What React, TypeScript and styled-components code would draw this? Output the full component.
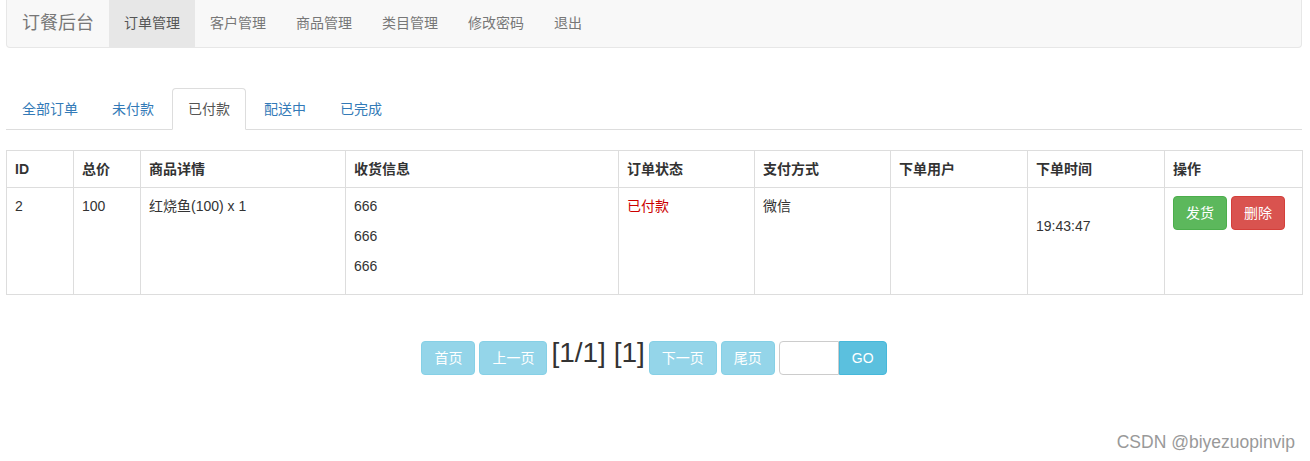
import styled, { createGlobalStyle } from "styled-components";

const GlobalStyle = createGlobalStyle`
  html, body {
    margin: 0;
    padding: 0;
    background: #fff;
  }
  body {
    font-family: "Liberation Sans", Arial, "Noto Sans CJK SC", sans-serif;
    font-size: 14px;
    line-height: 20px;
    color: #333;
  }
  * {
    box-sizing: border-box;
  }
`;

const Page = styled.div`
  position: relative;
  width: 1310px;
  height: 461px;
  padding: 0 8px 0 6px;
  overflow: hidden;
`;

const Navbar = styled.div`
  display: flex;
  align-items: stretch;
  height: 48px;
  background: #f8f8f8;
  border: 1px solid #e7e7e7;
  border-top: none;
  border-radius: 0 0 4px 4px;
`;

const Brand = styled.div`
  display: flex;
  align-items: center;
  padding: 0 15px 2px 15px;
  font-size: 18px;
  color: #777;
`;

const NavItem = styled.a<{ $active?: boolean }>`
  display: flex;
  align-items: center;
  padding: 0 15px 2px;
  color: ${({ $active }) => ($active ? "#555" : "#777")};
  background: ${({ $active }) => ($active ? "#e7e7e7" : "transparent")};
  text-decoration: none;
`;

const Tabs = styled.div`
  display: flex;
  margin-top: 40px;
  border-bottom: 1px solid #ddd;
`;

const Tab = styled.a<{ $active?: boolean }>`
  display: block;
  margin-right: 2px;
  margin-bottom: -1px;
  padding: 10px 15px;
  line-height: 20px;
  color: ${({ $active }) => ($active ? "#555" : "#337ab7")};
  background: ${({ $active }) => ($active ? "#fff" : "transparent")};
  border: 1px solid ${({ $active }) => ($active ? "#ddd" : "transparent")};
  border-bottom-color: transparent;
  border-radius: 4px 4px 0 0;
  text-decoration: none;
`;

const Table = styled.table`
  width: 1296px;
  margin-top: 20px;
  border-collapse: collapse;
  table-layout: fixed;
`;

const Th = styled.th`
  padding: 8px;
  text-align: left;
  font-weight: bold;
  color: #333;
  border: 1px solid #ddd;
  vertical-align: bottom;
`;

const Td = styled.td`
  padding: 8px;
  vertical-align: top;
  border: 1px solid #ddd;
`;

const Line = styled.p`
  margin: 0 0 10px;
`;

const Status = styled.span`
  color: #cc0000;
`;

const Time = styled.div`
  margin-top: 20px;
`;

const ActionBtn = styled.button<{ $kind: "success" | "danger" }>`
  display: inline-block;
  height: 34px;
  padding: 6px 12px;
  margin-right: 4px;
  font-family: inherit;
  font-size: 14px;
  line-height: 20px;
  color: #fff;
  border-radius: 4px;
  border: 1px solid ${({ $kind }) => ($kind === "success" ? "#4cae4c" : "#d43f3a")};
  background: ${({ $kind }) => ($kind === "success" ? "#5cb85c" : "#d9534f")};
`;

const Pager = styled.div`
  display: flex;
  justify-content: center;
  align-items: flex-start;
  gap: 4px;
  margin-top: 46px;
`;

const PageBtn = styled.button<{ $disabled?: boolean }>`
  height: 34px;
  padding: 6px 12px;
  font-family: inherit;
  font-size: 14px;
  line-height: 20px;
  color: #fff;
  border-radius: 4px;
  border: 1px solid #46b8da;
  background: #5bc0de;
  opacity: ${({ $disabled }) => ($disabled ? 0.65 : 1)};
`;

const PageText = styled.span`
  font-size: 28px;
  line-height: 28px;
  color: #333;
  margin-top: -2px;
`;

const PageInput = styled.input`
  width: 60px;
  height: 34px;
  padding: 6px 12px;
  border: 1px solid #ccc;
  border-radius: 4px 0 0 4px;
  margin-right: -4px;
`;

const GoBtn = styled(PageBtn)`
  border-radius: 0 4px 4px 0;
`;

const Watermark = styled.div`
  position: absolute;
  right: 15px;
  bottom: 9px;
  font-size: 17.5px;
  color: #999;
`;

const headers = ["ID", "总价", "商品详情", "收货信息", "订单状态", "支付方式", "下单用户", "下单时间", "操作"];
const widths = [67, 67, 205, 273, 136, 136, 137, 137, 138];

export default function App() {
  return (
    <>
      <GlobalStyle />
      <Page>
        <Navbar>
          <Brand>订餐后台</Brand>
          <NavItem $active>订单管理</NavItem>
          <NavItem>客户管理</NavItem>
          <NavItem>商品管理</NavItem>
          <NavItem>类目管理</NavItem>
          <NavItem>修改密码</NavItem>
          <NavItem>退出</NavItem>
        </Navbar>

        <Tabs>
          <Tab>全部订单</Tab>
          <Tab>未付款</Tab>
          <Tab $active>已付款</Tab>
          <Tab>配送中</Tab>
          <Tab>已完成</Tab>
        </Tabs>

        <Table>
          <colgroup>
            {widths.map((w, i) => (
              <col key={i} style={{ width: w }} />
            ))}
          </colgroup>
          <thead>
            <tr>
              {headers.map((h) => (
                <Th key={h}>{h}</Th>
              ))}
            </tr>
          </thead>
          <tbody>
            <tr>
              <Td>2</Td>
              <Td>100</Td>
              <Td>红烧鱼(100) x 1</Td>
              <Td>
                <Line>666</Line>
                <Line>666</Line>
                <Line>666</Line>
              </Td>
              <Td>
                <Status>已付款</Status>
              </Td>
              <Td>微信</Td>
              <Td></Td>
              <Td>
                <Time>19:43:47</Time>
              </Td>
              <Td>
                <ActionBtn $kind="success">发货</ActionBtn>
                <ActionBtn $kind="danger">删除</ActionBtn>
              </Td>
            </tr>
          </tbody>
        </Table>

        <Pager>
          <PageBtn $disabled>首页</PageBtn>
          <PageBtn $disabled>上一页</PageBtn>
          <PageText>[1/1] [1]</PageText>
          <PageBtn $disabled>下一页</PageBtn>
          <PageBtn $disabled>尾页</PageBtn>
          <PageInput type="text" />
          <GoBtn>GO</GoBtn>
        </Pager>

        <Watermark>CSDN @biyezuopinvip</Watermark>
      </Page>
    </>
  );
}
